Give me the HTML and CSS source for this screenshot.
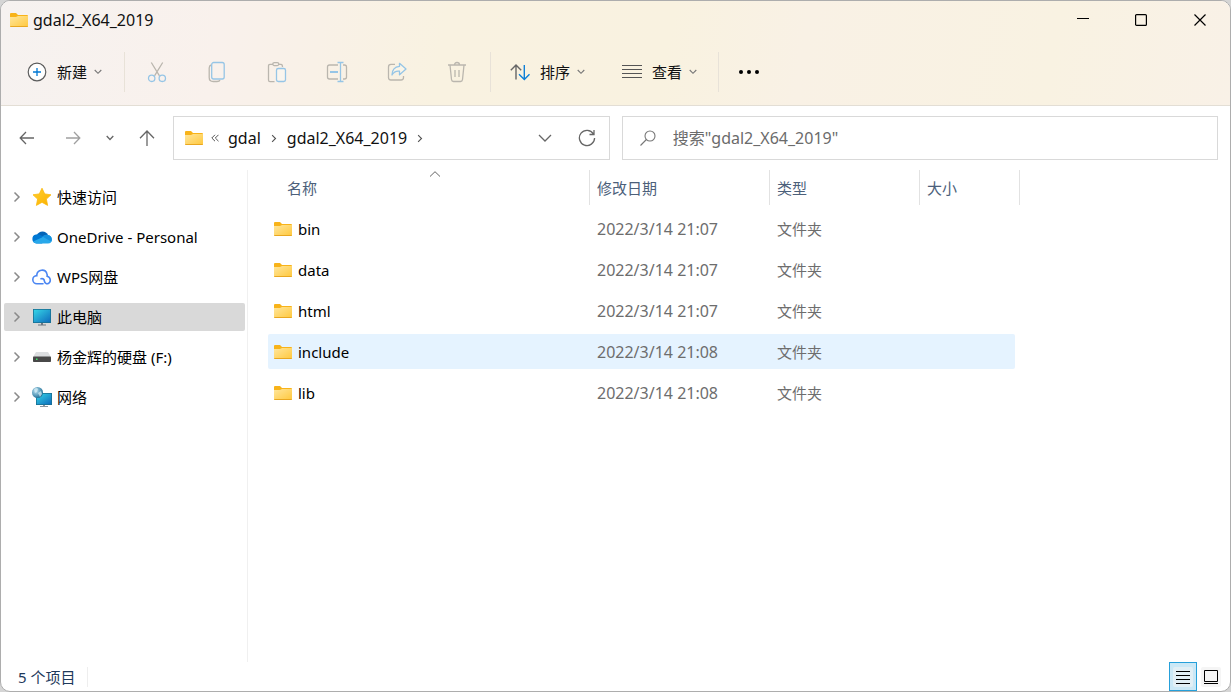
FILE: index.html
```html
<!DOCTYPE html>
<html lang="zh-CN">
<head>
<meta charset="utf-8">
<meta name="viewport" content="width=device-width, initial-scale=1">
<title>gdal2_X64_2019</title>
<link rel="stylesheet" href="styles.css">
</head>
<body>
<svg class="defs" aria-hidden="true">
  <defs>
    <linearGradient id="g-folder" x1="0" y1="0" x2="1" y2="1"><stop offset="0" stop-color="#ffe69c"/><stop offset="1" stop-color="#ffc83d"/></linearGradient>
    <linearGradient id="g-screen" x1="0" y1="0" x2="1" y2="1"><stop offset="0" stop-color="#35d5e6"/><stop offset="1" stop-color="#0f6cbd"/></linearGradient>
    <linearGradient id="g-star" x1="0" y1="0" x2="1" y2="1"><stop offset="0" stop-color="#ffd02e"/><stop offset="1" stop-color="#fbb000"/></linearGradient>
    <radialGradient id="g-globe" cx=".35" cy=".35" r=".7"><stop offset="0" stop-color="#b9e2f2"/><stop offset="1" stop-color="#1e6d96"/></radialGradient>
  </defs>
  <symbol id="folder" viewBox="0 0 18 14">
    <path d="M0 1q0-1 1-1h5l2 2h9q1 0 1 1v3H0z" fill="#f8b319"/>
    <path d="M0 4h6l2-1h10v10q0 1-1 1H1q-1 0-1-1z" fill="url(#g-folder)"/>
    <path d="M0 13h18q0 1-1 1H1q-1 0-1-1z" fill="#e9a720"/>
  </symbol>
  <symbol id="chev-right" viewBox="0 0 8 12"><path d="M1.500 1.500 6 6l-4.500 4.500" fill="none" stroke="currentColor" stroke-width="1.500"/></symbol>
  <symbol id="chev-down" viewBox="0 0 8 6"><path d="M.7 1 4 4.300 7.300 1" fill="none" stroke="currentColor" stroke-width="1.100"/></symbol>
</svg>

<div class="window">
  <header class="chrome">
    <div class="titlebar">
      <svg class="folder"><use href="#folder"/></svg>
      <h1 class="title">gdal2_X64_2019</h1>
      <button class="caption" aria-label="最小化"><svg width="12" height="12"><path d="M0 4.500h12" stroke="#000"/></svg></button>
      <button class="caption" aria-label="最大化"><svg width="12" height="12"><rect x=".6" y=".6" width="10.800" height="10.800" rx="1" fill="none" stroke="#000" stroke-width="1.200"/></svg></button>
      <button class="caption" aria-label="关闭"><svg width="12" height="12"><path d="M.5.500l11 11M11.500.500l-11 11" stroke="#000" stroke-width="1.200"/></svg></button>
    </div>
    <div class="toolbar">
      <button class="command command-new">
        <svg width="20" height="20" fill="none"><circle cx="10" cy="10" r="8.800" fill="#fff" stroke="#5c5c5c" stroke-width="1.200"/><path d="M10 6v8M6 10h8" stroke="#0078d4" stroke-width="1.300"/></svg>
        <span>新建</span>
        <svg class="tiny"><use href="#chev-down"/></svg>
      </button>
      <span class="divider"></span>
      <div class="actions">
        <button class="action" aria-label="剪切" disabled><svg width="20" height="22" fill="none" stroke-width="1.300"><path d="m4.300 1.500 8.200 13.300M15.700 1.500 7.500 14.800" stroke="#bab6ae"/><circle cx="4.700" cy="17.300" r="3.200" stroke="#96c5e6"/><circle cx="15.300" cy="17.300" r="3.200" stroke="#96c5e6"/></svg></button>
        <button class="action" aria-label="复制" disabled><svg width="20" height="22" fill="none" stroke-width="1.300"><path d="M4.200 4Q2.200 4.500 2.200 7v9.500q0 4 4 4H10q2.500 0 3-1.500" stroke="#bab6ae"/><rect x="4.700" y="1.500" width="12.500" height="16.500" rx="2" stroke="#96c5e6"/></svg></button>
        <button class="action" aria-label="粘贴" disabled><svg width="20" height="22" fill="none" stroke-width="1.300"><path d="M6 3.300H3Q1.500 3.300 1.500 5v14q0 1.600 1.500 1.600h4.500M12 3.300h2Q15.500 3.300 15.500 6" stroke="#bab6ae"/><rect x="5.800" y="1.600" width="6" height="3" rx="1.500" stroke="#bab6ae"/><rect x="9.500" y="7.500" width="9" height="13" rx="1.800" fill="#faf5ee" stroke="#96c5e6"/></svg></button>
        <button class="action" aria-label="重命名" disabled><svg width="22" height="22" fill="none" stroke-width="1.300"><path d="M12 4H3.500Q1.500 4 1.500 6v10q0 2 2 2H12M17 4h1.500Q20.500 4 20.500 6v10q0 2-2 2H17" stroke="#bab6ae"/><path d="M14.500 1.500v19M11.500 1.500h6M11.500 20.500h6" stroke="#96c5e6"/><path d="M4 11h8" stroke="#96c5e6" stroke-width="2"/></svg></button>
        <button class="action" aria-label="共享" disabled><svg width="20" height="22" fill="none" stroke-width="1.300" stroke-linejoin="round"><path d="M8 3.300H4Q1.500 3.300 1.500 6v10.500Q1.500 19 4 19h10q2.500 0 2.500-2.500V15" stroke="#bab6ae"/><path d="M12.500 2.300 19 8l-6.500 5.800v-3.600Q7.500 9.500 5 14q.2-8 7.500-8.600z" fill="#faf5e8" stroke="#96c5e6"/></svg></button>
        <button class="action" aria-label="删除" disabled><svg width="20" height="22" fill="none" stroke="#bab6ae" stroke-width="1.300"><path d="M1 4h18M3 4l1.500 14.500q.2 2 2 2h7q1.800 0 2-2L17 4M7.500 4q0-2.500 2.500-2.500T12.500 4M8 9v7M12 9v7"/></svg></button>
      </div>
      <span class="divider"></span>
      <button class="command command-sort">
        <svg width="20" height="18" fill="none" stroke-width="1.400"><path d="M6 16.500V2M.8 7.200 6 2l5.200 5.200" stroke="#666"/><path d="M14.300 2v14.500M9 11.300l5.300 5.200 5.200-5.200" stroke="#0f80d7"/></svg>
        <span>排序</span>
        <svg class="tiny"><use href="#chev-down"/></svg>
      </button>
      <button class="command command-view">
        <svg width="20" height="16" stroke="#555"><path d="M0 1.500h20M0 5.500h20M0 9.500h20M0 13.500h20"/></svg>
        <span>查看</span>
        <svg class="tiny"><use href="#chev-down"/></svg>
      </button>
      <span class="divider"></span>
      <button class="more" aria-label="更多"><svg width="20" height="6"><circle cx="2" cy="3" r="2"/><circle cx="10" cy="3" r="2"/><circle cx="18" cy="3" r="2"/></svg></button>
    </div>
  </header>

  <div class="navbar">
    <div class="history">
      <button class="nav" aria-label="后退"><svg width="16" height="14"><path d="M15 7H1.500M7 1 1.200 7 7 13"/></svg></button>
      <button class="nav forward" aria-label="前进"><svg width="16" height="14"><path d="M1 7h13.500M9 1l5.800 6L9 13"/></svg></button>
      <button class="nav recent" aria-label="最近的位置"><svg width="8" height="6"><path d="M.7 1 4 4.500 7.300 1"/></svg></button>
      <button class="nav" aria-label="上移"><svg width="16" height="16"><path d="M8 16V1.500M1 8.300 8 1l7 7.300"/></svg></button>
    </div>
    <div class="address">
      <svg class="folder"><use href="#folder"/></svg>
      <nav class="crumbs" aria-label="地址">
        <svg width="8" height="8" fill="none" stroke="#555"><path d="M4 .800.800 4 4 7.200M7.500.800 4.300 4l3.200 3.200"/></svg>
        <a href="#">gdal</a>
        <svg class="sep"><use href="#chev-right"/></svg>
        <a href="#">gdal2_X64_2019</a>
        <svg class="sep"><use href="#chev-right"/></svg>
      </nav>
      <button class="nav drop" aria-label="历史记录"><svg width="14" height="8"><path d="m1 1 6 6 6-6"/></svg></button>
      <button class="nav" aria-label="刷新"><svg width="18" height="18"><path d="M15.400 4.800A7.600 7.600 0 1 0 16.600 9M16 1v4.500h-4.500"/></svg></button>
    </div>
    <label class="search">
      <svg width="16" height="16" fill="none" stroke="#777" stroke-width="1.100"><circle cx="10" cy="6" r="5"/><path d="M6.400 9.500.500 15.500"/></svg>
      <input type="text" aria-label="搜索" placeholder="搜索&quot;gdal2_X64_2019&quot;">
    </label>
  </div>

  <div class="body">
    <nav class="sidebar" aria-label="导航窗格">
      <a class="place" href="#"><svg class="expand"><use href="#chev-right"/></svg>
        <svg class="icon" viewBox="0 0 20 20"><path d="m10 1.200 2.700 5.700 6.300.9-4.600 4.300 1.200 6.300-5.600-3.100-5.600 3.100 1.200-6.300L1 7.800l6.300-.9z" fill="url(#g-star)" stroke="#fbb90b" stroke-width=".8" stroke-linejoin="round"/></svg>
        <span>快速访问</span></a>
      <a class="place" href="#"><svg class="expand"><use href="#chev-right"/></svg>
        <svg class="icon" viewBox="0 0 20 20"><path d="M5 8a6 6 0 0 1 11 0l-4 3z" fill="#0364b8"/><path d="M4.500 16.500A4.500 4.500 0 0 1 4 7.600q3-.8 5 .9l6 3.500-5 4.500z" fill="#0078d4"/><path d="M10 10.500q2-3 5.500-2.500Q20 8.500 20 12.500q-.3 4-4 4H4.500Q2.500 16.300 1 14.500z" fill="#28a8ea"/><path d="m9.300 8.700 5.700 3.500 4.500 2.300Q20.500 9 16 8q-3-.8-5 1z" fill="#1490df"/></svg>
        <span>OneDrive - Personal</span></a>
      <a class="place" href="#"><svg class="expand"><use href="#chev-right"/></svg>
        <svg class="icon" viewBox="0 0 20 20" fill="none" stroke="#4b86f2" stroke-width="1.600" stroke-linecap="round"><path d="M11 16.800H5a4.100 4.100 0 0 1-.2-8.200V8a5.200 5.200 0 0 1 10.200-1q.3 1 .1 2.200a4 4 0 0 1 .7 7.600q-2.800 0-3.300-2.500-.5-3.300-3.500-2.500"/></svg>
        <span>WPS网盘</span></a>
      <a class="place selected" href="#" aria-current="page"><svg class="expand"><use href="#chev-right"/></svg>
        <svg class="icon" viewBox="0 0 20 20"><path d="M1 2h18v14H1z" fill="#187092"/><path d="M1.800 2.800h16.400v12.400H1.800z" fill="url(#g-screen)"/><path d="M9 16h2v1.500h3v1H6v-1h3z" fill="#6d7780"/></svg>
        <span>此电脑</span></a>
      <a class="place" href="#"><svg class="expand"><use href="#chev-right"/></svg>
        <svg class="icon" viewBox="0 0 20 20"><path d="M4 5h12l3 5H1z" fill="#dcdee0"/><rect x="1" y="9.500" width="18" height="5.500" rx=".8" fill="#484848"/><rect x="4" y="11.500" width="1.500" height="1.500" fill="#42e66b"/></svg>
        <span>杨金辉的硬盘 (F:)</span></a>
      <a class="place" href="#"><svg class="expand"><use href="#chev-right"/></svg>
        <svg class="icon" viewBox="0 0 20 20"><path d="M4 6h16v12H4z" fill="#187092"/><path d="M4.800 6.800h14.400v10.400H4.800z" fill="url(#g-screen)"/><path d="M11 18h2v1h3v1H8v-1h3z" fill="#8b969f"/><circle cx="5.500" cy="5.500" r="5.500" fill="url(#g-globe)"/><path d="M2 2q3-2 4 0L5 5 3 6zM6 6l3-2 1 3-2 3z" fill="#d6edf5" opacity=".7"/></svg>
        <span>网络</span></a>
    </nav>

    <main class="content">
      <table class="files">
        <colgroup><col class="col-name"><col class="col-date"><col class="col-type"><col></colgroup>
        <thead><tr>
          <th scope="col" aria-sort="ascending">名称<svg class="sort-mark" width="12" height="6"><path d="M1 5.500 6 .700l5 4.800" fill="none" stroke="#666"/></svg></th>
          <th scope="col">修改日期</th><th scope="col">类型</th><th scope="col">大小</th>
        </tr></thead>
        <tbody>
          <tr><td><div class="name"><svg class="folder"><use href="#folder"/></svg>bin</div></td><td class="date">2022/3/14 21:07</td><td>文件夹</td><td></td></tr>
          <tr><td><div class="name"><svg class="folder"><use href="#folder"/></svg>data</div></td><td class="date">2022/3/14 21:07</td><td>文件夹</td><td></td></tr>
          <tr><td><div class="name"><svg class="folder"><use href="#folder"/></svg>html</div></td><td class="date">2022/3/14 21:07</td><td>文件夹</td><td></td></tr>
          <tr class="hover"><td><div class="name"><svg class="folder"><use href="#folder"/></svg>include</div></td><td class="date">2022/3/14 21:08</td><td>文件夹</td><td></td></tr>
          <tr><td><div class="name"><svg class="folder"><use href="#folder"/></svg>lib</div></td><td class="date">2022/3/14 21:08</td><td>文件夹</td><td></td></tr>
        </tbody>
      </table>
    </main>
  </div>

  <footer class="status">
    <span class="count">5 个项目</span>
    <button class="mode active" aria-label="详细信息"><svg width="20" height="20"><rect width="20" height="20" rx="2" fill="#e2eff5"/><path d="M3 4.500h14M3 8.500h14M3 12.500h14M3 16.500h14" stroke="#000"/></svg></button>
    <button class="mode" aria-label="大图标"><svg width="20" height="20"><rect width="20" height="20" rx="2" fill="#f5f5f5"/><path d="M3.500 3.500h13v11h-13zM3 16.500h14" fill="none" stroke="#000"/></svg></button>
  </footer>
</div>
</body>
</html>
```
FILE: styles.css
```css
* {
  box-sizing: border-box;
}

body {
  margin: 0;
  background: #d5d5d5;
  color: #111;
  font: 15px/20px "Noto Sans", "Noto Sans CJK SC", sans-serif;
}

button,
input {
  padding: 0;
  border: 0;
  background: none;
  color: inherit;
  font: inherit;
}

a {
  color: inherit;
  text-decoration: none;
}

svg {
  display: block;
  flex: none;
}

.defs {
  position: absolute;
  width: 0;
  height: 0;
}

.folder {
  width: 18px;
  height: 14px;
}

.window {
  display: flex;
  flex-direction: column;
  min-height: 100vh;
  overflow: hidden;
  border: 1px solid #adadad;
  border-radius: 10px;
  background: #fff;
}

/* Title bar and commands */
.chrome {
  border-bottom: 1px solid #e3ded5;
  background: linear-gradient(100deg, #f6f2f0 0%, #f9f1ec 18%, #f9f1e7 26%, #f9f2e1 36%, #f9f2e0 54%, #f9f1e5 65%, #f9f2e2 85%, #f9f1e7 100%);
}

.titlebar {
  display: flex;
  align-items: center;
  height: 37px;
  padding-left: 9px;
}

.title {
  flex: 1;
  margin: 0 0 0 5px;
  font-size: 16px;
  font-weight: 400;
}

.caption {
  display: grid;
  place-items: center;
  width: 58px;
  height: 36px;
}

.titlebar .caption:last-child {
  width: 60px;
}

.toolbar {
  display: flex;
  align-items: center;
  height: 67px;
  padding-left: 26px;
}

.command {
  display: flex;
  align-items: center;
  gap: 10px;
}

.command-new {
  margin-right: 22px;
}

.command-sort {
  margin: 0 37px 0 19px;
}

.command-view {
  margin-right: 21px;
}

.tiny {
  width: 8px;
  height: 6px;
  margin-left: -3px;
  color: #777;
}

.divider {
  width: 1px;
  height: 40px;
  background: #e8e2d8;
}

.actions {
  display: flex;
  padding: 0 3px 0 2px;
}

.action,
.more {
  display: grid;
  place-items: center;
  width: 60px;
  height: 40px;
}

/* Navigation row */
.navbar {
  display: flex;
  padding: 10px 12px 10px 0;
}

.history {
  display: flex;
  flex: none;
  align-items: center;
  gap: 30px;
  width: 172px;
  padding-left: 18px;
}

.nav {
  display: grid;
  place-items: center;
}

.nav path {
  fill: none;
  stroke: #666;
  stroke-width: 1.3;
}

.forward path {
  stroke: #a0a0a0;
}

.recent {
  margin: 0 -5px;
}

.address,
.search {
  display: flex;
  align-items: center;
  height: 44px;
  border: 1px solid #d9d9d9;
}

.address {
  flex: 437;
  margin-right: 12px;
  padding: 0 13px 0 11px;
}

.crumbs {
  display: flex;
  flex: 1;
  align-items: center;
  gap: 9px;
  margin-left: 8px;
  font-size: 16px;
}

.sep {
  width: 8px;
  height: 9px;
  color: #555;
}

.drop {
  margin-right: 26px;
}

.search {
  flex: 596;
  gap: 17px;
  padding: 0 17px;
}

.search input {
  flex: 1;
  min-width: 0;
  outline: 0;
  font-size: 16px;
}

.search input::placeholder {
  color: #6b6b6b;
  opacity: 1;
}

/* Folder tree */
.body {
  display: flex;
  flex: 1;
}

.sidebar {
  display: flex;
  flex-direction: column;
  flex: none;
  gap: 12px;
  width: 247px;
  padding: 13px 3px;
  border-right: 1px solid #f0f0f0;
}

.place {
  display: flex;
  align-items: center;
  height: 28px;
  width: 241px;
  padding-left: 9px;
  border-radius: 2px;
  color: #000;
}

.selected {
  background: #d9d9d9;
}

.expand {
  width: 8px;
  height: 12px;
  color: #8a8a8a;
}

.icon {
  width: 20px;
  height: 20px;
  margin: 0 5px 0 11px;
}

/* File list */
.content {
  flex: 1;
  padding-left: 20px;
}

.files {
  width: 747px;
  margin-top: -6px;
  border-spacing: 0 6px;
  table-layout: fixed;
}

.col-name {
  width: 322px;
}

.col-date {
  width: 180px;
}

.col-type {
  width: 150px;
}

.files th {
  position: relative;
  height: 35px;
  padding: 0 0 0 7px;
  border-right: 1px solid #e2e2e2;
  color: #4c607a;
  font-weight: 400;
  text-align: left;
}

.files th:first-child {
  padding-left: 19px;
}

.files th:last-child {
  border-right: 0;
}

.files th:last-child::after {
  content: "";
  position: absolute;
  top: 0;
  right: -5px;
  width: 1px;
  height: 100%;
  background: #e2e2e2;
}

.sort-mark {
  position: absolute;
  top: 1px;
  left: 50%;
}

.files td {
  height: 35px;
  padding: 0 0 0 7px;
  color: #6d6d6d;
}

.files td:first-child {
  padding-left: 6px;
  border-radius: 2px 0 0 2px;
}

.files td:last-child {
  border-radius: 0 2px 2px 0;
}

.files .date {
  font-size: 16px;
}

.hover td {
  background: #e5f3ff;
}

.name {
  display: flex;
  align-items: center;
  gap: 6px;
  color: #000;
}

/* Status row */
.status {
  display: flex;
  align-items: center;
  height: 29px;
  padding-right: 5px;
  color: #1e395b;
}

.count {
  flex: none;
  margin-right: auto;
  padding: 0 12px 0 17px;
  border-right: 1px solid #eee;
}

.mode {
  display: grid;
  place-items: center;
  width: 28px;
  height: 29px;
}

.active {
  border: 1px solid #26a0da;
  background: #cbe8f6;
}
```
